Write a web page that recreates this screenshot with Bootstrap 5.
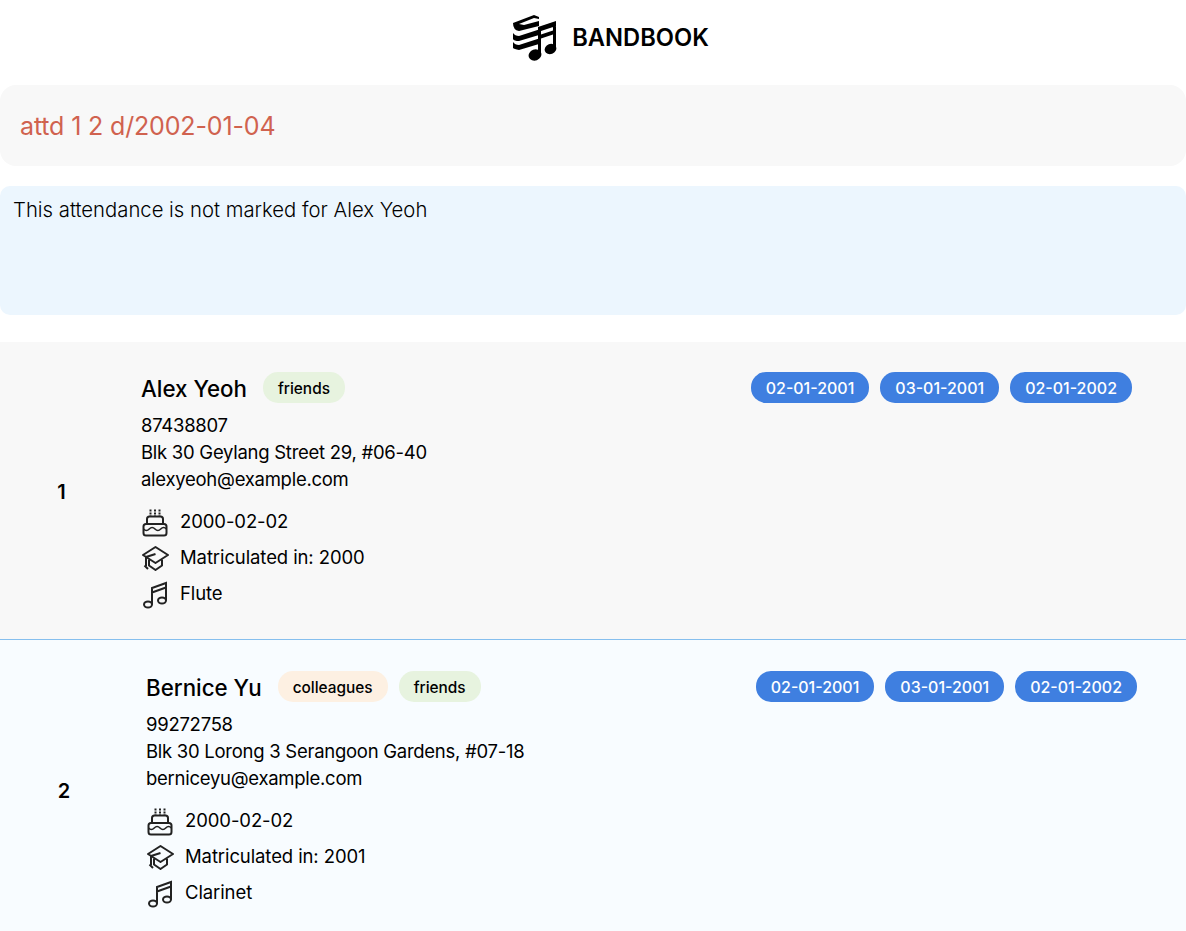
<!DOCTYPE html>
<html lang="en">
<head>
<meta charset="utf-8">
<title>BandBook</title>
<link rel="stylesheet" href="https://cdn.jsdelivr.net/npm/bootstrap@5.3.0/dist/css/bootstrap.min.css">
<style>
html,body{height:931px;overflow:hidden;background:#fff}
body{font-family:"Inter","Liberation Sans",sans-serif;color:#000}
.topbar{height:85px;padding-left:35px;padding-bottom:10px}
.brandname{font-size:23.700px;font-weight:600;margin-left:14px;line-height:1}
.cmdbox{height:81px;background:#f8f8f8;border-radius:16px;padding:3px 0 0 20px;color:#d0624f;font-size:25px;letter-spacing:-.15px}
.resbox{height:129px;margin-top:20px;background:#ecf6fe;border-radius:10px;padding:10px 13px;font-size:20.300px;line-height:27px;font-weight:300}
.plist{margin-top:27px}
.prow{display:flex;height:298px;background:#f8f8f8;border-bottom:1px solid #86bfee}
.prow2{background:#f8fcff;border-bottom:0;height:299px}
.pidx{width:123px;font-size:20px;font-weight:600;padding-top:2px}
.prow2 .pidx{width:128px}
.pbody{flex:1;padding:30px 54px 0 18px}
.prow2 .pbody{padding-top:31px;padding-right:49px}
.phead{height:31px;margin-bottom:9px}
.pname{font-size:22.300px;font-weight:500;margin-right:16px;padding-top:3px}
.ptag{height:31px;border-radius:15px;padding:2px 15px 0;font-size:15.400px;font-weight:500;margin-right:11px}
.tag-g{background:#e7f3df}
.tag-o{background:#fdf0e2}
.pdate{height:31px;border-radius:15px;padding:1px 15px 0;background:#3f7fe0;color:#fff;font-size:16px;font-weight:500;margin-left:11px}
.pline{font-size:18.500px;line-height:27px;letter-spacing:-.27px}
.plast{margin-bottom:11px}
.pinfo{height:36px;font-size:18.500px;letter-spacing:-.1px}
.pinfo svg{width:28px;height:30px;margin:0 10px 0 1px}
</style>
</head>
<body>
<div class="topbar d-flex align-items-center justify-content-center">
<svg width="46" height="47" viewBox="0 0 46 47"><path d="M1 9 L22 1 L27 3 V5 L22 4 L7 10 L12 11 L27 7 V12 L7 17 Q1 16 1 9Z M1 19 Q3 22 7 22 L27 15.500 V21 L7 27 Q2 27 1 25Z M1 28 Q3 31 7 31 L27 24.500 V30 L7 36 Q2 35 1 34Z" fill="#000"/><path d="M26 13 L44 7 V12 L29 17 V41 H26Z M29 20.500 L41 16.500 V10 H44 V35 H41 V20.500 L29 24.500Z" fill="#000"/><ellipse cx="23" cy="41" rx="6.500" ry="5.500" transform="rotate(-20 23 41)"/><ellipse cx="38.500" cy="35" rx="6" ry="5" transform="rotate(-20 38.500 35)"/></svg>
<span class="brandname">BANDBOOK</span>
</div>
<div class="cmdbox d-flex align-items-center">attd 1 2 d/2002-01-04</div>
<div class="resbox">This attendance is not marked for Alex Yeoh</div>
<div class="plist">
<div class="prow">
<div class="pidx d-flex align-items-center justify-content-center">1</div>
<div class="pbody">
<div class="phead d-flex align-items-center">
<span class="pname">Alex Yeoh</span>
<span class="ptag tag-g d-flex align-items-center">friends</span>
<div class="ms-auto d-flex"><span class="pdate d-flex align-items-center">02-01-2001</span><span class="pdate d-flex align-items-center">03-01-2001</span><span class="pdate d-flex align-items-center">02-01-2002</span></div>
</div>
<div class="pline">87438807</div>
<div class="pline">Blk 30 Geylang Street 29, #06-40</div>
<div class="pline plast">alexyeoh@example.com</div>
<div class="pinfo d-flex align-items-center"><svg viewBox="0 0 28 30"><use href="#ic-cake"/></svg>2000-02-02</div>
<div class="pinfo d-flex align-items-center"><svg viewBox="0 0 28 30"><use href="#ic-cap"/></svg>Matriculated in: 2000</div>
<div class="pinfo d-flex align-items-center"><svg viewBox="0 0 28 30"><use href="#ic-note"/></svg>Flute</div>
</div>
</div>
<div class="prow prow2">
<div class="pidx d-flex align-items-center justify-content-center">2</div>
<div class="pbody">
<div class="phead d-flex align-items-center">
<span class="pname">Bernice Yu</span>
<span class="ptag tag-o d-flex align-items-center">colleagues</span>
<span class="ptag tag-g d-flex align-items-center">friends</span>
<div class="ms-auto d-flex"><span class="pdate d-flex align-items-center">02-01-2001</span><span class="pdate d-flex align-items-center">03-01-2001</span><span class="pdate d-flex align-items-center">02-01-2002</span></div>
</div>
<div class="pline">99272758</div>
<div class="pline">Blk 30 Lorong 3 Serangoon Gardens, #07-18</div>
<div class="pline plast">berniceyu@example.com</div>
<div class="pinfo d-flex align-items-center"><svg viewBox="0 0 28 30"><use href="#ic-cake"/></svg>2000-02-02</div>
<div class="pinfo d-flex align-items-center"><svg viewBox="0 0 28 30"><use href="#ic-cap"/></svg>Matriculated in: 2001</div>
<div class="pinfo d-flex align-items-center"><svg viewBox="0 0 28 30"><use href="#ic-note"/></svg>Clarinet</div>
</div>
</div>
</div>
<svg width="0" height="0" class="d-none"><defs>
<g id="ic-cake" fill="none" stroke="#222" stroke-width="2"><rect x="1.500" y="17" width="23" height="11.500" rx="2.500"/><path d="M1.500 22 q2.900 3 5.750 0 t5.750 0 t5.750 0 t5.750 0" stroke-width="1.600"/><path d="M5 17 v-5 q0-2.500 2.500-2.500 h11 q2.500 0 2.500 2.500 v5"/><path d="M8.500 2.500v6.500M13 2.500v6.500M17.500 2.500v6.500" stroke-dasharray="2 1"/></g>
<g id="ic-cap" fill="none" stroke="#222" stroke-width="2" stroke-linejoin="round"><path d="M13.500 4 L26 12 L13.500 20 L1 12Z"/><path d="M7 16.500 V22.500 L13.500 27 L20 22.500 V16.500"/><path d="M13.500 11 L4 14 V23"/><path d="M2.500 22.500 L6 26"/></g>
<g id="ic-note" fill="none" stroke="#222" stroke-width="2"><ellipse cx="6" cy="25.500" rx="4" ry="3"/><ellipse cx="20" cy="21.500" rx="4" ry="3"/><path d="M10 25.500 V9 L24 4 V21.500 M10 13.500 L24 8.500"/></g>
</defs></svg>
<script src="https://cdn.jsdelivr.net/npm/bootstrap@5.3.0/dist/js/bootstrap.bundle.min.js"></script>
</body>
</html>
